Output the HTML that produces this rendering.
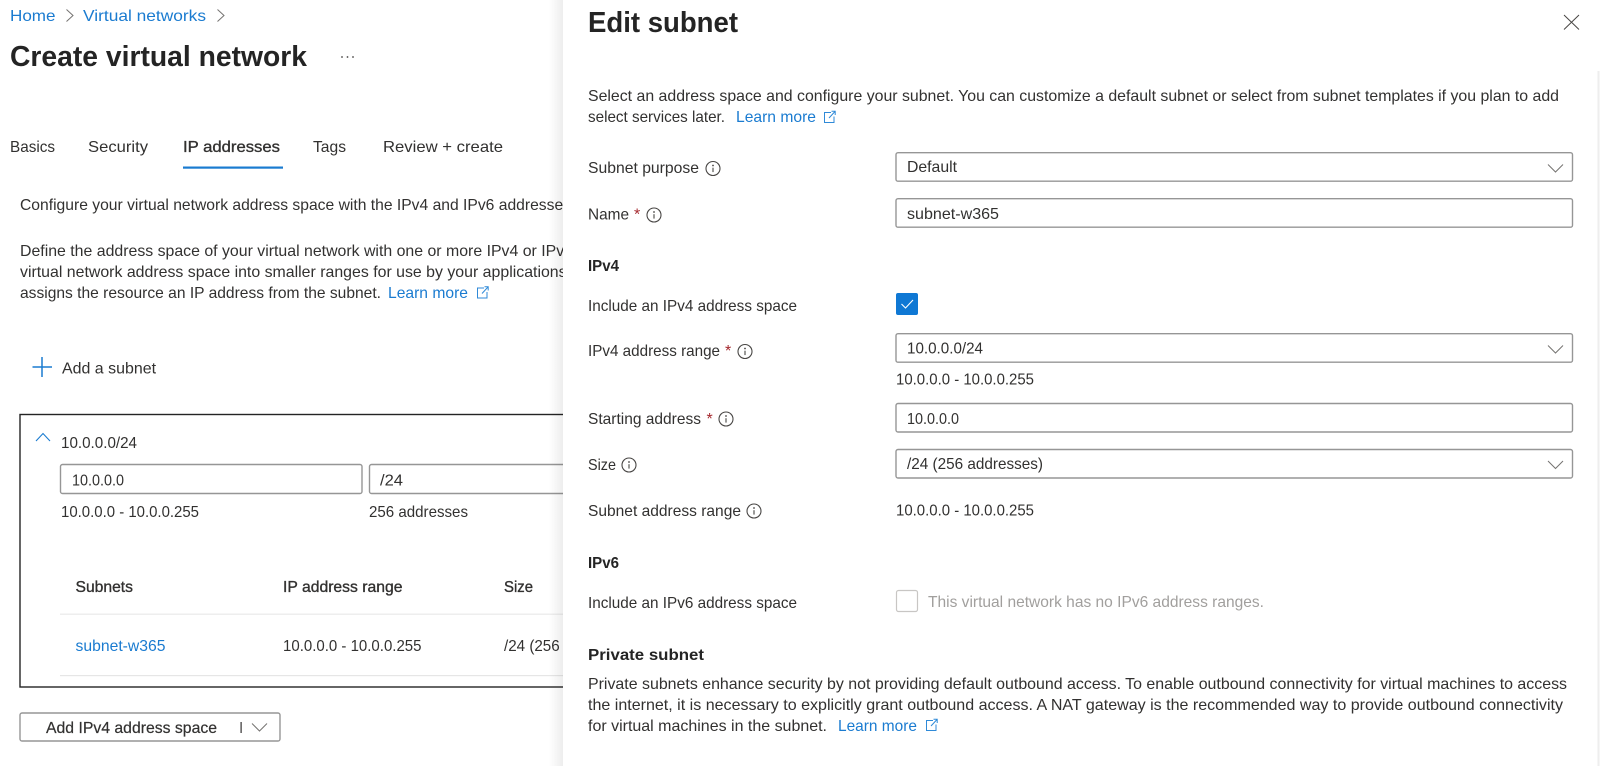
<!DOCTYPE html>
<html><head><meta charset="utf-8"><title>Edit subnet</title>
<style>
html,body{margin:0;padding:0;background:#fff;width:1600px;height:766px;overflow:hidden}
svg{display:block;filter:blur(.3px)}
text{font-family:"Liberation Sans",sans-serif;font-size:16px;fill:#323130}
.l{fill:#1a7bd0}
.b{font-weight:bold;fill:#242424}
.ic{fill:none;stroke:#484644;stroke-width:1.1}
.lk{fill:none;stroke:#2f8ad8;stroke-width:1}
.box{fill:#fff;stroke:#969696;stroke-width:1.4}
.chev{fill:none;stroke:#757371;stroke-width:1}
</style></head><body>
<svg width="1600" height="766" viewBox="0 0 1600 766" xmlns="http://www.w3.org/2000/svg">
<defs>
<linearGradient id="sh" x1="0" x2="1" y1="0" y2="0"><stop offset="0" stop-color="#000" stop-opacity="0"/><stop offset="1" stop-color="#000" stop-opacity=".07"/></linearGradient>
<g id="info"><circle r="7" class="ic"/><path d="M0-.8V3.6" class="ic"/><circle cy="-3" r=".9" fill="#484644"/></g>
<g id="ext"><path d="M9 2H2.500V12H12V6M7 7.500L13 1M9.500 .8H13.200V4.500" class="lk"/></g>
</defs>
<rect width="1600" height="766" fill="#fff"/>

<text x="10" y="21" textLength="45.500" lengthAdjust="spacingAndGlyphs" class="l">Home</text>
<path d="M66.500 9.500L73 15.500L66.500 21.500" class="chev"/>
<text x="83" y="21" textLength="123" lengthAdjust="spacingAndGlyphs" class="l">Virtual networks</text>
<path d="M217.500 9.500L224 15.500L217.500 21.500" class="chev"/>
<text x="10" y="66" textLength="297" lengthAdjust="spacingAndGlyphs" class="b" style="font-size:29px">Create virtual network</text>
<g fill="#484644"><circle cx="342" cy="57" r=".9"/><circle cx="347.500" cy="57" r=".9"/><circle cx="353" cy="57" r=".9"/></g>

<text x="10" y="152" textLength="45" lengthAdjust="spacingAndGlyphs">Basics</text>
<text x="88" y="152" textLength="60" lengthAdjust="spacingAndGlyphs">Security</text>
<text x="183" y="152" textLength="97" lengthAdjust="spacingAndGlyphs" style="stroke:#323130;stroke-width:.35">IP addresses</text>
<rect x="183" y="166.500" width="100" height="2.200" fill="#1a7bd0"/>
<text x="313" y="152" textLength="33" lengthAdjust="spacingAndGlyphs">Tags</text>
<text x="383" y="152" textLength="120" lengthAdjust="spacingAndGlyphs">Review + create</text>

<text x="20" y="210" textLength="551" lengthAdjust="spacingAndGlyphs">Configure your virtual network address space with the IPv4 and IPv6 addresses</text>
<text x="20" y="256" textLength="553" lengthAdjust="spacingAndGlyphs">Define the address space of your virtual network with one or more IPv4 or IPv6</text>
<text x="20" y="277" textLength="551" lengthAdjust="spacingAndGlyphs">virtual network address space into smaller ranges for use by your applications.</text>
<text x="20" y="298" textLength="361" lengthAdjust="spacingAndGlyphs">assigns the resource an IP address from the subnet.</text>
<text x="388" y="298" textLength="80" lengthAdjust="spacingAndGlyphs" class="l">Learn more</text>
<use href="#ext" x="475" y="286"/>

<path d="M32.500 367H52M42 357V377" fill="none" stroke="#1a7bd0" stroke-width="1.500"/>
<text x="62" y="373.500" textLength="94" lengthAdjust="spacingAndGlyphs">Add a subnet</text>

<rect x="20" y="414.500" width="600" height="272.500" fill="none" stroke="#242424" stroke-width="1.400"/>
<path d="M36 441L43 433.500L50 441" fill="none" stroke="#1a7bd0" stroke-width="1.100"/>
<text x="61" y="448" textLength="76" lengthAdjust="spacingAndGlyphs">10.0.0.0/24</text>
<rect x="60.500" y="464.500" width="301.500" height="29" rx="2" class="box"/>
<text x="72" y="485.500" textLength="52" lengthAdjust="spacingAndGlyphs">10.0.0.0</text>
<rect x="369.500" y="464.500" width="250" height="29" rx="2" class="box"/>
<text x="380" y="485.500" textLength="23" lengthAdjust="spacingAndGlyphs">/24</text>
<text x="61" y="517" textLength="138" lengthAdjust="spacingAndGlyphs">10.0.0.0 - 10.0.0.255</text>
<text x="369" y="517" textLength="99" lengthAdjust="spacingAndGlyphs">256 addresses</text>

<text x="75.500" y="592" textLength="57.500" lengthAdjust="spacingAndGlyphs" style="stroke:#323130;stroke-width:.35">Subnets</text>
<text x="283" y="592" textLength="119.500" lengthAdjust="spacingAndGlyphs" style="stroke:#323130;stroke-width:.35">IP address range</text>
<text x="504" y="592" textLength="29" lengthAdjust="spacingAndGlyphs" style="stroke:#323130;stroke-width:.35">Size</text>
<rect x="60" y="613.500" width="510" height="1.500" fill="#eeeeee"/>
<text x="75.500" y="651" textLength="90" lengthAdjust="spacingAndGlyphs" class="l">subnet-w365</text>
<text x="283" y="651" textLength="138.500" lengthAdjust="spacingAndGlyphs">10.0.0.0 - 10.0.0.255</text>
<text x="504" y="651" textLength="135" lengthAdjust="spacingAndGlyphs">/24 (256 addresses)</text>
<rect x="60" y="675" width="510" height="1.200" fill="#e6e6e6"/>

<rect x="20" y="713" width="260" height="28" rx="2" class="box"/>
<text x="46" y="733" textLength="171" lengthAdjust="spacingAndGlyphs" style="stroke:#323130;stroke-width:.2">Add IPv4 address space</text>
<rect x="240.500" y="722" width="1.200" height="11" fill="#323130"/>
<path d="M252 723.500L259.500 731L267 723.500" class="chev"/>

<rect x="549" y="0" width="14" height="766" fill="url(#sh)"/>
<rect x="563" y="0" width="1037" height="766" fill="#fff"/>
<rect x="1597.500" y="71" width="2" height="695" fill="#eeeeee"/>

<text x="588" y="32" textLength="150" lengthAdjust="spacingAndGlyphs" class="b" style="font-size:29px">Edit subnet</text>
<path d="M1564 15L1579 29.500M1579 15L1564 29.500" fill="none" stroke="#484644" stroke-width="1"/>

<text x="588" y="101" textLength="971" lengthAdjust="spacingAndGlyphs">Select an address space and configure your subnet. You can customize a default subnet or select from subnet templates if you plan to add</text>
<text x="588" y="122" textLength="137" lengthAdjust="spacingAndGlyphs">select services later.</text>
<text x="736" y="122" textLength="80" lengthAdjust="spacingAndGlyphs" class="l">Learn more</text>
<use href="#ext" x="822" y="110.500"/>

<text x="588" y="173" textLength="111" lengthAdjust="spacingAndGlyphs">Subnet purpose</text>
<use href="#info" x="713" y="168.500"/>
<rect x="896" y="152.700" width="676.500" height="28.500" rx="2" class="box"/>
<text x="907" y="172" textLength="50" lengthAdjust="spacingAndGlyphs">Default</text>
<path d="M1548 164.500L1555.500 172L1563 164.500" class="chev"/>

<text x="588" y="219.500" textLength="41" lengthAdjust="spacingAndGlyphs">Name</text>
<text x="634" y="219.500" style="fill:#a4262c">*</text>
<use href="#info" x="654" y="215"/>
<rect x="896" y="198.700" width="676.500" height="28.500" rx="2" class="box"/>
<text x="907" y="219" textLength="92" lengthAdjust="spacingAndGlyphs">subnet-w365</text>

<text x="588" y="271" textLength="31" lengthAdjust="spacingAndGlyphs" class="b">IPv4</text>
<text x="588" y="311" textLength="209" lengthAdjust="spacingAndGlyphs">Include an IPv4 address space</text>
<rect x="896" y="293" width="22" height="22" rx="2" fill="#0f78d4"/>
<path d="M901.500 304L905.500 308L913 300" fill="none" stroke="#fff" stroke-width="1.100"/>

<text x="588" y="356" textLength="132" lengthAdjust="spacingAndGlyphs">IPv4 address range</text>
<text x="725" y="356" style="fill:#a4262c">*</text>
<use href="#info" x="745" y="351.500"/>
<rect x="896" y="333.700" width="676.500" height="28.500" rx="2" class="box"/>
<text x="907" y="353.500" textLength="76" lengthAdjust="spacingAndGlyphs">10.0.0.0/24</text>
<path d="M1548 345.500L1555.500 353L1563 345.500" class="chev"/>
<text x="896" y="384.500" textLength="138" lengthAdjust="spacingAndGlyphs">10.0.0.0 - 10.0.0.255</text>

<text x="588" y="424" textLength="113" lengthAdjust="spacingAndGlyphs">Starting address</text>
<text x="706.500" y="424" style="fill:#a4262c">*</text>
<use href="#info" x="726" y="419"/>
<rect x="896" y="403.500" width="676.500" height="28.500" rx="2" class="box"/>
<text x="907" y="424" textLength="52" lengthAdjust="spacingAndGlyphs">10.0.0.0</text>

<text x="588" y="470" textLength="28" lengthAdjust="spacingAndGlyphs">Size</text>
<use href="#info" x="629" y="465"/>
<rect x="896" y="449.500" width="676.500" height="28.500" rx="2" class="box"/>
<text x="907" y="469" textLength="136" lengthAdjust="spacingAndGlyphs">/24 (256 addresses)</text>
<path d="M1548 461L1555.500 468.500L1563 461" class="chev"/>

<text x="588" y="516" textLength="153" lengthAdjust="spacingAndGlyphs">Subnet address range</text>
<use href="#info" x="754" y="511"/>
<text x="896" y="515.500" textLength="138" lengthAdjust="spacingAndGlyphs">10.0.0.0 - 10.0.0.255</text>

<text x="588" y="568" textLength="31" lengthAdjust="spacingAndGlyphs" class="b">IPv6</text>
<text x="588" y="608" textLength="209" lengthAdjust="spacingAndGlyphs">Include an IPv6 address space</text>
<rect x="896.500" y="590.500" width="21" height="21" rx="2" fill="#fff" stroke="#c8c6c4" stroke-width="1.200"/>
<text x="928" y="607" textLength="336" lengthAdjust="spacingAndGlyphs" style="fill:#a19f9d">This virtual network has no IPv6 address ranges.</text>

<text x="588" y="660" textLength="116" lengthAdjust="spacingAndGlyphs" class="b">Private subnet</text>
<text x="588" y="689" textLength="979" lengthAdjust="spacingAndGlyphs">Private subnets enhance security by not providing default outbound access. To enable outbound connectivity for virtual machines to access</text>
<text x="588" y="710" textLength="975" lengthAdjust="spacingAndGlyphs">the internet, it is necessary to explicitly grant outbound access. A NAT gateway is the recommended way to provide outbound connectivity</text>
<text x="588" y="731" textLength="239" lengthAdjust="spacingAndGlyphs">for virtual machines in the subnet.</text>
<text x="838" y="731" textLength="79" lengthAdjust="spacingAndGlyphs" class="l">Learn more</text>
<use href="#ext" x="924" y="718.500"/>
</svg>
</body></html>
